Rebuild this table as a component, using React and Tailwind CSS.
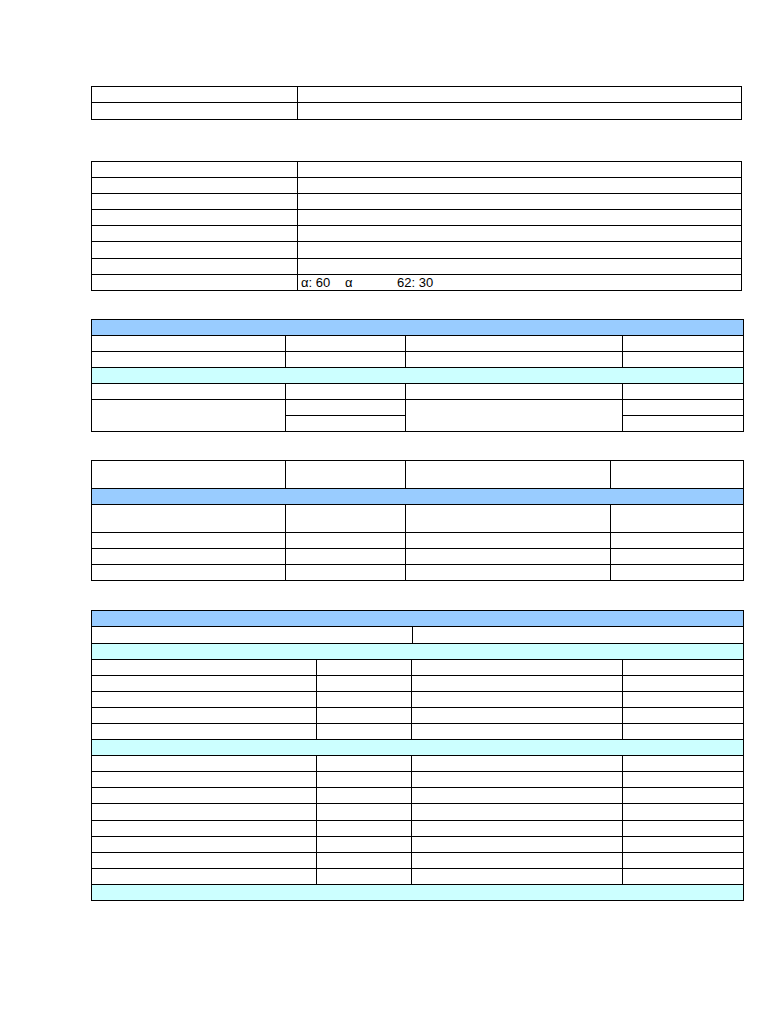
import React from "react";

const B = "border-r border-b border-black box-border";

function Row({ h = "h-[16px]", cells, bg = "" }) {
  return (
    <div className={`flex ${h} ${bg}`}>
      {cells.map((w, i) => (
        <div key={i} className={`${B} ${w} shrink-0`} />
      ))}
    </div>
  );
}

function Band({ bg, h = "h-[16px]" }) {
  return <div className={`${h} ${bg} border-r border-b border-black box-border`} />;
}

export default function App() {
  const t1 = ["w-[206px]", "w-[444px]"];
  const t3 = ["w-[194px]", "w-[120px]", "w-[217px]", "w-[121px]"];
  const t4 = ["w-[194px]", "w-[120px]", "w-[205px]", "w-[133px]"];
  const t5 = ["w-[225px]", "w-[95px]", "w-[211px]", "w-[121px]"];
  const blue = "bg-[#99ccff]";
  const cyan = "bg-[#ccffff]";

  return (
    <div
      className="w-[768px] h-[1024px] bg-white pt-[86px] pl-[91px]"
      style={{ fontFamily: '"Liberation Sans", Arial, sans-serif' }}
    >
      {/* Table 1 */}
      <div className="w-[651px] border-t border-l border-black">
        <Row cells={t1} />
        <Row h="h-[17px]" cells={t1} />
      </div>

      {/* Table 2 */}
      <div className="w-[651px] mt-[41px] border-t border-l border-black">
        <Row cells={t1} />
        <Row cells={t1} />
        <Row cells={t1} />
        <Row cells={t1} />
        <Row cells={t1} />
        <Row h="h-[17px]" cells={t1} />
        <Row cells={t1} />
        <div className="flex h-[16px]">
          <div className={`${B} w-[206px]`} />
          <div className={`${B} w-[444px] pl-[3px] text-[13px] leading-[15px] text-black whitespace-pre flex items-center`}>
            <span className="inline-block w-[44px]">α: 60</span>
            <span className="inline-block w-[52px]">α</span>
            <span>62: 30</span>
          </div>
        </div>
      </div>

      {/* Table 3 */}
      <div className="w-[653px] mt-[28px] border-t border-l border-black">
        <Band bg={blue} />
        <Row cells={t3} />
        <Row cells={t3} />
        <Band bg={cyan} />
        <Row cells={t3} />
        <div className="flex h-[32px]">
          <div className={`${B} w-[194px]`} />
          <div className="flex flex-col w-[120px]">
            <div className={`${B} h-[16px]`} />
            <div className={`${B} h-[16px]`} />
          </div>
          <div className={`${B} w-[217px]`} />
          <div className="flex flex-col w-[121px]">
            <div className={`${B} h-[16px]`} />
            <div className={`${B} h-[16px]`} />
          </div>
        </div>
      </div>

      {/* Table 4 */}
      <div className="w-[653px] mt-[28px] border-t border-l border-black">
        <Row h="h-[28px]" cells={t4} />
        <Band bg={blue} />
        <Row h="h-[28px]" cells={t4} />
        <Row cells={t4} />
        <Row cells={t4} />
        <Row cells={t4} />
      </div>

      {/* Table 5 */}
      <div className="w-[653px] mt-[29px] border-t border-l border-black">
        <Band bg={blue} />
        <Row h="h-[17px]" cells={["w-[321px]", "w-[331px]"]} />
        <Band bg={cyan} />
        <Row cells={t5} />
        <Row cells={t5} />
        <Row cells={t5} />
        <Row cells={t5} />
        <Row cells={t5} />
        <Band bg={cyan} />
        <Row cells={t5} />
        <Row cells={t5} />
        <Row cells={t5} />
        <Row h="h-[17px]" cells={t5} />
        <Row cells={t5} />
        <Row cells={t5} />
        <Row cells={t5} />
        <Row cells={t5} />
        <Band bg={cyan} />
      </div>
    </div>
  );
}
